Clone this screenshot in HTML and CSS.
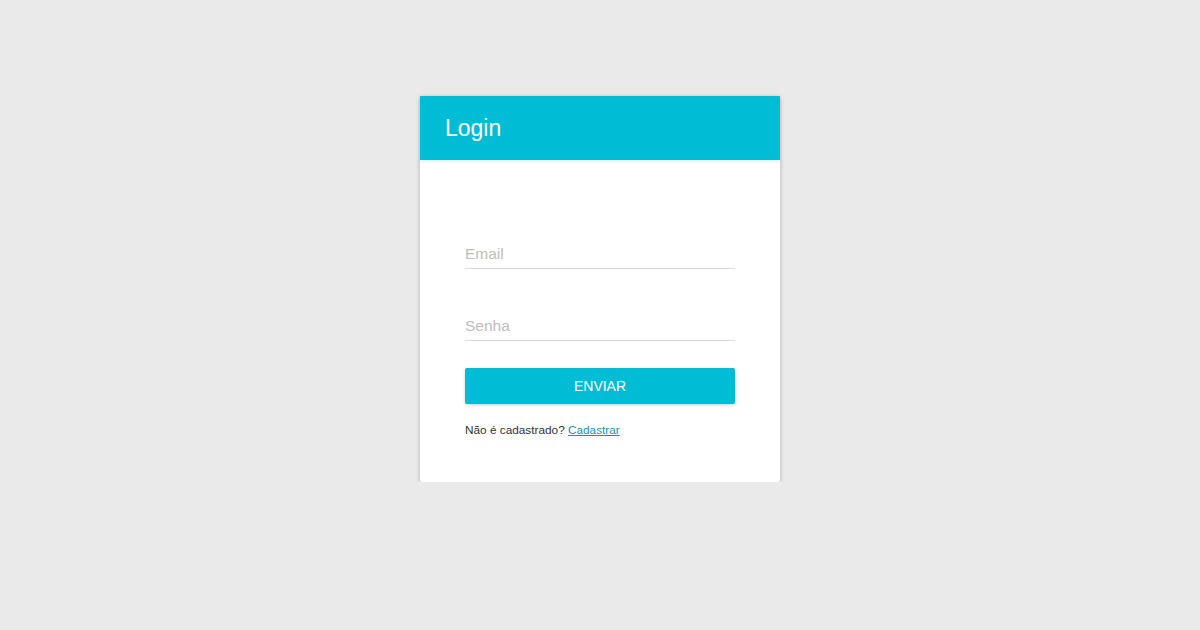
FILE: index.html
```html
<!DOCTYPE html>
<html>
<head>
<meta charset="utf-8">
<link rel="stylesheet" href="styles.css">
</head>
<body>
<div class="page">
  <div class="card">
    <div class="card-header">Login</div>
    <form class="card-body">
      <input class="field field-email" type="text" placeholder="Email">
      <input class="field field-pass" type="password" placeholder="Senha">
      <button class="btn" type="button">ENVIAR</button>
      <p class="note">Não é cadastrado? <a href="#">Cadastrar</a></p>
    </form>
  </div>
</div>
</body>
</html>
```
FILE: styles.css
```css
html, body {
  margin: 0;
  padding: 0;
  background: #eaeaea;
  font-family: "Liberation Sans", Arial, sans-serif;
}
.page {
  display: flex;
  justify-content: center;
  padding-top: 96px;
}
.card {
  width: 360px;
  background: #fff;
  box-shadow: 0 1px 4px rgba(0,0,0,0.25);
  border-radius: 2px;
}
.card-header {
  height: 64px;
  background: #00bcd4;
  color: #fff;
  font-size: 23px;
  line-height: 64px;
  padding-left: 25px;
  box-shadow: 0 2px 3px rgba(0,0,0,0.08);
  position: relative;
}
.card-body {
  display: flex;
  flex-direction: column;
  padding: 78px 45px 45px;
  margin: 0;
}
.field {
  display: block;
  box-sizing: border-box;
  width: 100%;
  height: 31px;
  border: none;
  border-bottom: 1px solid #dcdcdc;
  outline: none;
  padding: 2px 0 0;
  font-family: "Liberation Sans", Arial, sans-serif;
  font-size: 15.5px;
  color: #333;
  background: transparent;
}
.field::placeholder {
  color: #bdbdbd;
}
.field-pass {
  margin-top: 41px;
}
.btn {
  margin-top: 27px;
  height: 36px;
  border: none;
  border-radius: 2px;
  background: #00bcd4;
  color: #fff;
  font-family: "Liberation Sans", Arial, sans-serif;
  font-size: 14px;
  box-shadow: 0 1px 3px rgba(0,0,0,0.2);
  cursor: pointer;
}
.note {
  margin: 19px 0 0;
  font-size: 11.8px;
  line-height: 14px;
  color: #333;
}
.note a {
  color: #1a8fb3;
}
```
